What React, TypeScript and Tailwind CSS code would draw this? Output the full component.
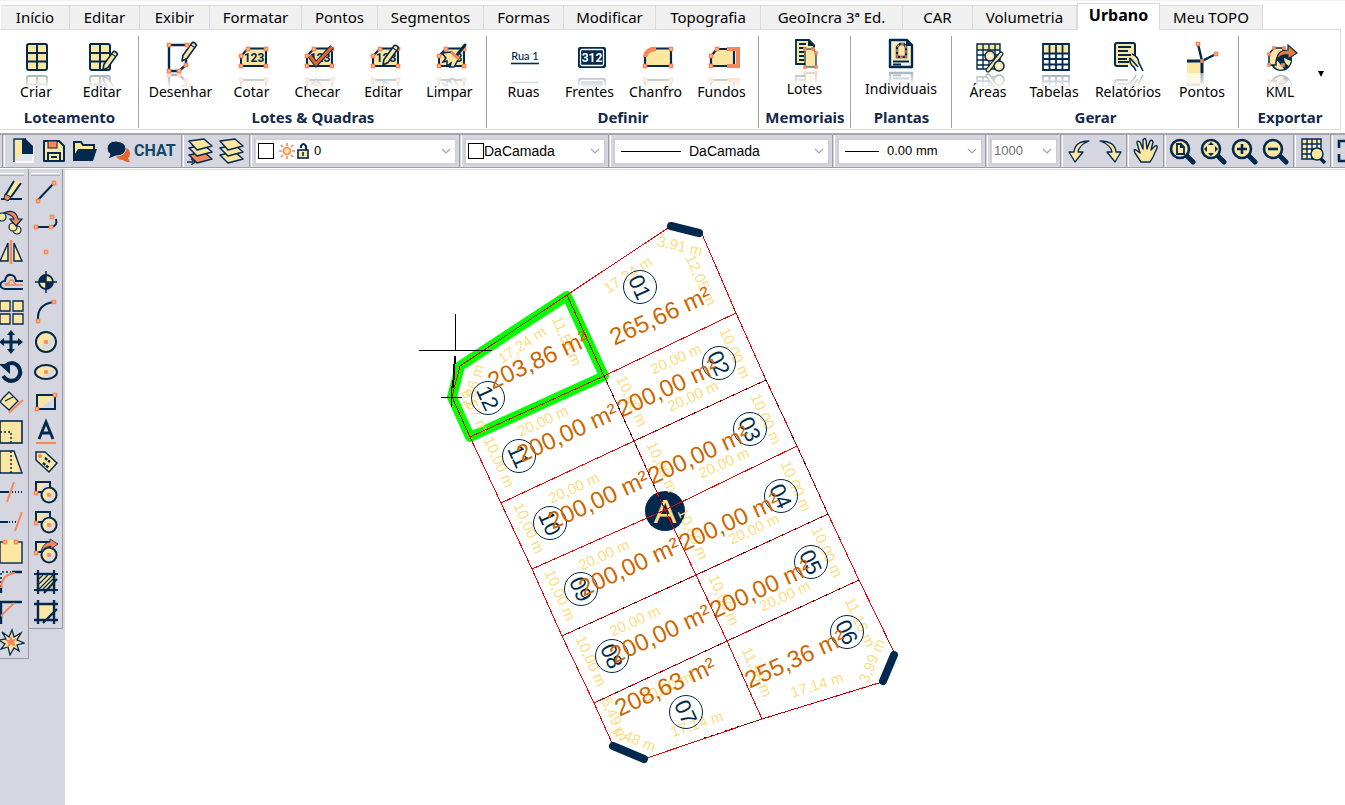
import React from 'react';

const N = '#00294d';
const Y = '#fde6a2';
const O = '#f5875a';

type Glyph = React.ReactNode;

const Dot = ({ x, y, s = 3 }: { x: number; y: number; s?: number }) => (
  <rect x={x - s / 2} y={y - s / 2} width={s} height={s} fill={Y} stroke={O} strokeWidth="1.6" />
);

const Pencil = ({ x1, y1, x2, y2 }: { x1: number; y1: number; x2: number; y2: number }) => {
  const dx = x2 - x1;
  const dy = y2 - y1;
  const len = Math.hypot(dx, dy);
  const a = (Math.atan2(dy, dx) * 180) / Math.PI;
  return (
    <g transform={`translate(${x1} ${y1}) rotate(${a})`}>
      <path d={`M1-2.5H${len - 5}L${len} 0L${len - 5} 2.5H1Q-1 0 1-2.5Z`} fill={Y} stroke={N} strokeWidth="1.6" strokeLinejoin="round" />
      <path d="M4-2.5V2.5" stroke={N} strokeWidth="1" />
    </g>
  );
};

const Lot = () => (
  <g>
    <path d="M5 25V15L12 7.500H30V25Z" fill={Y} stroke={N} strokeWidth="2" />
    <text x="18" y="21" fontSize="12" fontWeight="700" fontFamily="Roboto, sans-serif" fill={N} textAnchor="middle">
      123
    </text>
    <Dot x={5} y={25} />
    <Dot x={5} y={15} />
    <Dot x={12} y={8} />
    <Dot x={30} y={8} />
    <Dot x={30} y={25} />
  </g>
);

// ribbon glyphs, 32 x 32
const big: Record<string, Glyph> = {
  criar: (
    <g stroke={N} strokeWidth="2">
      <rect x="7" y="3" width="20" height="26" rx="2" fill={Y} />
      <path d="M17 3V29M7 12H27M7 20.500H27" />
    </g>
  ),
  editarLote: (
    <g>
      <path d="M5 3H22Q24 3 24 5V27Q24 29 22 29H6Q4 29 4 27V4Z" fill={Y} stroke={N} strokeWidth="2" />
      <path d="M14 3V29M4 12H24M4 20.500H24" stroke={N} strokeWidth="2" />
      <Pencil x1={30} y1={11} x2={17} y2={29} />
    </g>
  ),
  desenhar: (
    <g>
      <path d="M4 4H22M4 4V30H14L21 24V18" fill="none" stroke={N} strokeWidth="2.400" />
      <Pencil x1={30} y1={2} x2={17} y2={20} />
      <Dot x={4} y={4} />
      <Dot x={22} y={4} />
      <Dot x={21} y={24} />
      <Dot x={14} y={30} />
      <Dot x={4} y={30} />
    </g>
  ),
  cotar: <Lot />,
  checar: (
    <g>
      <Lot />
      <path d="M8 15L14 23L30 6" fill="none" stroke={N} strokeWidth="5" />
      <path d="M8 15L14 23L30 6" fill="none" stroke="#e8622c" strokeWidth="3" />
    </g>
  ),
  editarNum: (
    <g>
      <Lot />
      <Pencil x1={29} y1={5} x2={15} y2={24} />
    </g>
  ),
  limpar: (
    <g>
      <Lot />
      <path d="M31 4L23 14" stroke={N} strokeWidth="3" strokeLinecap="round" />
      <path d="M8 12L17 11L25 17L20 26H16L17 22L13 25L13 20L9 21L12 17Z" fill={Y} stroke={N} strokeWidth="1.500" />
      <path d="M17 11L25 18" stroke={O} strokeWidth="3" />
    </g>
  ),
  ruas: (
    <g>
      <text x="17" y="19" fontSize="11" fontWeight="500" fontFamily="Lato, sans-serif" fill={N} textAnchor="middle">
        Rua 1
      </text>
      <path d="M3 22.500H31" stroke={N} strokeWidth="1.600" />
    </g>
  ),
  frentes: (
    <g>
      <rect x="4" y="6" width="28" height="21" rx="2" fill={N} />
      <rect x="6.500" y="8.500" width="23" height="16" rx="1.500" fill="none" stroke="#fff" strokeWidth="1.300" />
      <text x="18" y="21" fontSize="12" fontWeight="700" fontFamily="Roboto, sans-serif" fill="#fff" textAnchor="middle">
        312
      </text>
    </g>
  ),
  chanfro: (
    <g>
      <path d="M5 25V14L12 7.500H31V25Z" fill={Y} stroke={N} strokeWidth="2.200" />
      <path d="M5 16Q6 8 16 8" fill="none" stroke={O} strokeWidth="4.500" />
      <Dot x={5} y={25} />
      <Dot x={31} y={25} />
      <Dot x={31} y={8} />
    </g>
  ),
  fundos: (
    <g>
      <path d="M5 25V15L11 8H28V25Z" fill={Y} stroke={N} strokeWidth="2.200" />
      <path d="M21 6H34V27H21V23H30V10H21Z" fill={O} />
      <Dot x={5} y={25} />
      <Dot x={5} y={15} />
      <Dot x={11} y={8} />
    </g>
  ),
  lotes: (
    <g>
      <path d="M7 2H20L25 7V26H7Z" fill={Y} stroke={N} strokeWidth="1.800" />
      <path d="M19 1L26 8H19Z" fill={N} />
      <path d="M10 6H17M10 10H17M10 14H15M10 18H15M10 22H15" stroke={N} strokeWidth="1.800" />
      <path d="M16 29V11H24L27 15V29Z" fill={Y} stroke={N} strokeWidth="1.200" />
      <Dot x={16} y={11} s={2} />
      <Dot x={24} y={11} s={2} />
      <Dot x={27} y={15} s={2} />
      <Dot x={16} y={29} s={2} />
      <Dot x={27} y={29} s={2} />
    </g>
  ),
  individuais: (
    <g>
      <path d="M5 2H22L27 7V29H5Z" fill="#f6f2e6" stroke={N} strokeWidth="2.400" strokeLinejoin="round" />
      <path d="M21 1L28 8H21Z" fill={N} />
      <path d="M8 5H20V9H24V22H8Z" fill={Y} />
      <path d="M12 19V9L15 6H19L21 9V19Z" fill={Y} stroke={N} strokeWidth="2.400" />
      <path d="M12 19V9L15 6H19L21 9V19Z" fill="none" stroke={O} strokeWidth="1.400" strokeDasharray="3 2" />
      <path d="M8 23.500H24M8 26.500H16" stroke={N} strokeWidth="1.800" />
    </g>
  ),
  areas: (
    <g>
      <rect x="5" y="3" width="23" height="25" fill="#fff" />
      <rect x="5" y="3" width="23" height="6" fill={Y} />
      <path d="M5 3H28V28H5ZM5 9H28M5 14H28M5 19H28M5 24H28M11 3V28M17 3V28M23 3V28" fill="none" stroke={N} strokeWidth="1.400" />
      <path d="M29 13L16 29" stroke={N} strokeWidth="5" strokeLinecap="round" />
      <path d="M29 13L16 29" stroke={Y} strokeWidth="2.500" strokeLinecap="round" />
      <g stroke={N} strokeWidth="5.500" fill="none">
        <circle cx="18" cy="15" r="3" />
        <circle cx="27" cy="25" r="3" />
      </g>
      <g stroke={Y} strokeWidth="2.500" fill="#fff">
        <circle cx="18" cy="15" r="3" />
        <circle cx="27" cy="25" r="3" />
      </g>
    </g>
  ),
  tabelas: (
    <g>
      <rect x="5" y="3" width="26" height="26" fill="#fff" />
      <rect x="5" y="3" width="26" height="10" fill={Y} />
      <path d="M5 3H31V29H5ZM5 12.500H31M5 18H31M5 23.500H31M11.500 3V29M18 3V29M24.500 3V29" fill="none" stroke={N} strokeWidth="1.800" />
    </g>
  ),
  relatorios: (
    <g>
      <path d="M4 2H21Q23 2 23 4V17L27 22V24H4Q3 24 3 22V3Z" fill={Y} />
      <path d="M16 25H5Q3 25 3 23V4Q3 2 5 2H21Q23 2 23 4V15" fill="none" stroke={N} strokeWidth="2" />
      <path d="M6 6H19M6 10H16M6 14H19M6 18H15M6 21H17" stroke={N} strokeWidth="1.800" />
      <path d="M18 17L26 26M20 13Q26 15 27 22L31 30M18 17Q17 23 22 26L24 30" fill="none" stroke={N} strokeWidth="1.600" />
    </g>
  ),
  pontos: (
    <g>
      <rect x="1" y="20" width="15" height="12" fill={Y} />
      <path d="M1 20H16V32" fill="none" stroke={N} strokeWidth="3" />
      <path d="M16 20L12 3M16 20L30 13" stroke={N} strokeWidth="2.400" />
      <Dot x={12} y={3} />
      <Dot x={30} y={13} />
      <Dot x={16} y={20} s={2} />
    </g>
  ),
  kml: (
    <g>
      <circle cx="17" cy="19" r="11" fill={N} />
      <path d="M8 21Q13 17 16 23L20 28Q12 31 8 21ZM20 17L27 20L25 25Q20 22 20 17Z" fill={Y} />
      <path d="M5 24V13L10 7H19V13Q11 15 12 24Z" fill={Y} stroke={N} strokeWidth="1.500" />
      <path d="M13 19Q13 9 24 9V4L33 12L24 18V14Q17 13 13 19Z" fill="#f0763c" stroke={N} strokeWidth="1.200" />
      <Dot x={5} y={24} s={2} />
      <Dot x={5} y={13} s={2} />
      <Dot x={10} y={7} s={2} />
      <Dot x={20} y={7} s={2} />
      <Dot x={19} y={24} s={2} />
    </g>
  ),
};

const Lens = ({ children }: { children: Glyph }) => (
  <g>
    <path d="M18 18L25 25" stroke={N} strokeWidth="5" strokeLinecap="round" />
    <circle cx="12" cy="12" r="9" fill={Y} stroke={N} strokeWidth="2.600" />
    {children}
  </g>
);

const Layers = ({ last = Y }: { last?: string }) => (
  <g stroke={N} strokeWidth="1.500" strokeLinejoin="round">
    <path d="M3 18L18 15L26 22L11 26Z" fill={last} />
    <path d="M3 11L18 8L26 15L11 19Z" fill={Y} />
    <path d="M3 4L18 2L26 9L11 13Z" fill={Y} />
  </g>
);

// toolbar glyphs, 28 x 28
const bar: Record<string, Glyph> = {
  novo: (
    <g>
      <path d="M5 3H17L23 9V25H5Z" fill="#eef0f6" />
      <path d="M5 3H14V17L5 25Z" fill={Y} />
      <path d="M5 25V2H17L24 9V25Z" fill="none" stroke="#fff" strokeWidth="1.400" />
      <path d="M5 25V2H17" fill="none" stroke={N} strokeWidth="1.400" />
      <path d="M13 2H17L24 9V17H13Z" fill={N} />
      <path d="M6 24L13 17H23V24Z" fill="#e4e6ee" />
    </g>
  ),
  salvar: (
    <g>
      <path d="M4 4H19L24 9V24H4Z" fill={Y} stroke={N} strokeWidth="2" strokeLinejoin="round" />
      <rect x="8" y="4" width="9" height="7" fill={O} stroke={N} />
      <path d="M8 24V16H20V24M11 20H17" fill="none" stroke={N} strokeWidth="2" />
    </g>
  ),
  abrir: (
    <g>
      <path d="M3 22V5H10L12 8H23V12" fill={Y} stroke={N} strokeWidth="2" />
      <path d="M7 12H26L22 24H2V20Z" fill={N} />
    </g>
  ),
  niveis: (
    <g>
      <Layers last={O} />
      <path d="M1 25H7M5 22L9 25L5 28" fill="none" stroke={N} strokeWidth="1.500" />
    </g>
  ),
  camadas: <Layers />,
  desfazer: <path d="M24 4Q10 4 9 15L4 15L10 25L18 15L13 15Q14 8 24 4Z" fill={Y} stroke={N} strokeWidth="1.300" strokeLinejoin="round" />,
  refazer: <path d="M4 4Q19 4 20 15L25 15L19 25L11 15L16 15Q15 8 4 4Z" fill={Y} stroke={N} strokeWidth="1.300" strokeLinejoin="round" />,
  mao: (
    <path
      d="M9 25L3 16Q1 12 4 13L8 16L5 6Q5 3 8 5L11 12L11 3Q13 0 14 3L15 12L18 4Q20 2 21 5L19 13L23 9Q26 8 25 11L21 20L18 25Z"
      fill={Y}
      stroke={N}
      strokeWidth="1.400"
      strokeLinejoin="round"
    />
  ),
  zoomPagina: (
    <Lens>
      <path d="M9 7H13L16 10V17H9Z" fill={Y} stroke={N} strokeWidth="1.800" />
      <path d="M12 6L17 11H12Z" fill={N} />
    </Lens>
  ),
  zoomTudo: (
    <Lens>
      <path d="M12 5L15 8H9ZM12 19L9 16H15ZM5 12L8 9V15ZM19 12L16 15V9Z" fill={N} />
    </Lens>
  ),
  zoomMais: (
    <Lens>
      <path d="M7 12H17M12 7V17" stroke={N} strokeWidth="2.600" />
    </Lens>
  ),
  zoomMenos: (
    <Lens>
      <path d="M7 12H17" stroke={N} strokeWidth="2.600" />
    </Lens>
  ),
  consulta: (
    <g>
      <rect x="3" y="2" width="19" height="20" fill="#fff" />
      <path d="M3 2H22V7H3ZM3 7H8V22H3Z" fill={Y} />
      <path d="M3 2H22V22H3ZM3 7H22M3 12H22M3 17H22M8 2V22M13 2V22M18 2V22" fill="none" stroke={N} strokeWidth="1.400" />
      <path d="M21 21L26 26" stroke={N} strokeWidth="3.500" />
      <circle cx="18" cy="17" r="6" fill={Y} stroke={N} strokeWidth="1.500" />
    </g>
  ),
};

const Cut = ({ children }: { children: Glyph }) => (
  <g>
    <rect x="4" y="4" width="14" height="10" fill={Y} stroke={N} strokeWidth="2" />
    <circle cx="17" cy="17" r="7.500" fill={Y} stroke={N} strokeWidth="2" />
    <path d="M6 13L14 6H17V9Q12 9 10 13Z" fill="#d9d9e4" />
    <path d="M14 22L22 13Q24 20 18 23Z" fill="#d9d9e4" />
    {children}
  </g>
);

// side bar glyphs, 28 x 28
const left: Record<string, Glyph> = {
  Apagar: (
    <g>
      <path d="M8 19L17 3H25L14 20Z" fill={Y} />
      <path d="M8 18L17 3M14 19L24 5M4 21H25" stroke={N} strokeWidth="2" />
      <path d="M8 16L14 19L11 23L7 21Z" fill={O} stroke={N} />
    </g>
  ),
  Copiar: (
    <g stroke={N} strokeWidth="1.200">
      <circle cx="5" cy="9" r="4" fill={Y} />
      <circle cx="20" cy="22" r="4" fill={Y} />
      <circle cx="16" cy="19" r="4" fill={Y} />
      <path d="M6 5Q19 0 21 11H25L19 18L13 11H17Q15 6 6 5Z" fill={O} />
    </g>
  ),
  Espelhar: (
    <g>
      <path d="M11 5V23H3ZM17 5V23H25Z" fill={Y} stroke={N} strokeWidth="1.400" />
      <path d="M14 2V26" stroke={O} strokeWidth="2.400" />
    </g>
  ),
  Offset: (
    <g fill="none" strokeWidth="2">
      <path d="M26 21H8Q2 20 4 15Q5 13 8 13Q9 6 14 7Q18 7 19 13H26" stroke={N} />
      <path d="M26 17H9Q7 17 9 16L12 15Q13 10 16 13L19 17" stroke={O} strokeWidth="1.600" />
    </g>
  ),
  Matriz: (
    <g fill={Y} stroke={N} strokeWidth="1.300">
      <path d="M3 3H13V13H3ZM16 3H26V13H16ZM3 16H13V26H3ZM16 16H26V26H16Z" />
    </g>
  ),
  Mover: <path d="M14 2L18 7H15.500V12.500H21V10L26 14L21 18V15.500H15.500V21H18L14 26L10 21H12.500V15.500H7V18L2 14L7 10V12.500H12.500V7H10Z" fill={N} />,
  Girar: (
    <g>
      <path d="M8 8Q15 2 21 8Q26 15 20 21Q12 26 6 18" fill="none" stroke={N} strokeWidth="4" />
      <path d="M2 6H13V16Z" fill={N} />
    </g>
  ),
  Alinhar: (
    <g>
      <path d="M6 10L12 4L17 9L21 13L12 22L3 14Z" fill={Y} stroke={N} strokeWidth="1.300" />
      <path d="M8 13L16 9" stroke={N} strokeWidth="1.200" />
      <path d="M12 25L26 12" stroke={O} strokeWidth="2" />
    </g>
  ),
  Escala: (
    <g>
      <rect x="3" y="3" width="22" height="22" fill={Y} stroke={N} strokeWidth="1.600" />
      <path d="M3 14H14V25" fill="none" stroke={N} strokeWidth="1.500" strokeDasharray="2 2" />
    </g>
  ),
  Esticar: (
    <g>
      <path d="M3 3H17L25 25H3Z" fill={Y} stroke={N} strokeWidth="1.400" />
      <path d="M14 3V25" stroke={N} strokeWidth="1.500" strokeDasharray="2 2" />
    </g>
  ),
  Aparar: (
    <g>
      <path d="M2 14H12" stroke={N} strokeWidth="2" />
      <path d="M15 14H26" stroke={N} strokeWidth="2" strokeDasharray="1 2" />
      <path d="M17 4L10 24" stroke={O} strokeWidth="2" />
    </g>
  ),
  Estender: (
    <g>
      <path d="M2 14H11" stroke={N} strokeWidth="2" />
      <path d="M12 14H21" stroke={N} strokeWidth="2" strokeDasharray="1 2" />
      <path d="M25 4L18 23" stroke={O} strokeWidth="2" />
    </g>
  ),
  Quebrar: (
    <g>
      <rect x="3" y="4" width="22" height="21" fill={Y} stroke={N} strokeWidth="1.400" />
      <rect x="8" y="2" width="10" height="4" fill={Y} />
      <Dot x={8} y={4} />
      <Dot x={19} y={4} />
    </g>
  ),
  Arredondar: (
    <g fill="none">
      <path d="M4 25V17M15 4H25" stroke={N} strokeWidth="2.400" />
      <path d="M4 15V4H14" stroke={N} strokeWidth="1.600" strokeDasharray="2 2" />
      <path d="M4 20Q5 6 18 5" stroke={O} strokeWidth="2" />
    </g>
  ),
  Chanfrar: (
    <g fill="none">
      <path d="M4 26V4H25" stroke={N} strokeWidth="2.400" />
      <path d="M4 18L17 5" stroke={O} strokeWidth="2" />
    </g>
  ),
  Explodir: (
    <g>
      <path d="M15 2L17 9L24 5L20 12L27 15L20 17L22 23L17 20L13 27L11 19L4 21L8 16L2 12L9 11L5 4L12 9Z" fill={Y} stroke={N} strokeWidth="1.300" />
      <path d="M14 8L16 12L20 10L17 14L19 19L14 16.500L10 20L11.500 15L8 12L12 12Z" fill={O} />
    </g>
  ),
};

const right: Record<string, Glyph> = {
  Linha: (
    <g>
      <path d="M6 22L22 5" stroke={N} strokeWidth="2" />
      <Dot x={6} y={23} />
      <Dot x={22} y={5} />
    </g>
  ),
  Polilinha: (
    <g>
      <path d="M5 19H19Q26 18 24 11" fill="none" stroke={N} strokeWidth="2" />
      <Dot x={4} y={19} />
      <Dot x={19} y={19} />
      <Dot x={20} y={9} />
    </g>
  ),
  Ponto: <Dot x={14} y={14} />,
  'Ponto topográfico': (
    <g>
      <circle cx="14" cy="14" r="7" fill={Y} stroke={N} strokeWidth="1.800" />
      <path d="M14 14V7A7 7 0 0 0 7 14ZM14 14V21A7 7 0 0 0 21 14Z" fill={N} />
      <path d="M14 3V25M3 14H25" stroke={N} strokeWidth="1.500" />
    </g>
  ),
  Arco: (
    <g>
      <path d="M6 22Q5 6 22 4" fill="none" stroke={N} strokeWidth="2" />
      <Dot x={6} y={23} />
      <Dot x={22} y={4} />
    </g>
  ),
  Círculo: (
    <g>
      <circle cx="14" cy="14" r="10" fill={Y} stroke={N} strokeWidth="2" />
      <path d="M8 21L21 8Q25 17 16 22Z" fill="#d9d9e4" />
      <Dot x={14} y={14} s={2} />
    </g>
  ),
  Elipse: (
    <g>
      <ellipse cx="14" cy="14" rx="11" ry="7" fill={Y} stroke={N} strokeWidth="2" />
      <path d="M10 19L21 10Q26 17 14 20Z" fill="#d9d9e4" />
      <Dot x={14} y={14} s={2} />
    </g>
  ),
  Retângulo: (
    <g>
      <rect x="5" y="7" width="18" height="14" fill={Y} stroke={N} strokeWidth="2" />
      <path d="M8 20L22 9V20Z" fill="#d9d9e4" />
      <Dot x={5} y={21} />
      <Dot x={23} y={7} />
    </g>
  ),
  Texto: (
    <g>
      <path d="M7 21L14 4L21 21M9 15H19" fill="none" stroke={N} strokeWidth="2.800" />
      <path d="M4 25H24" stroke={O} strokeWidth="2" />
    </g>
  ),
  Etiqueta: (
    <g>
      <path d="M4 4H13L25 15L17 24L4 12Z" fill={Y} stroke={N} strokeWidth="1.500" />
      <circle cx="8" cy="8" r="2" fill={O} />
      <path d="M13 10L18 14M11 15L17 20" stroke={N} strokeWidth="2.400" strokeDasharray="3 1" />
    </g>
  ),
  'Unir formas': (
    <Cut>
      <Dot x={4} y={15} />
      <Dot x={17} y={17} s={2} />
    </Cut>
  ),
  'Separar formas': (
    <Cut>
      <Dot x={4} y={15} />
      <Dot x={17} y={17} s={2} />
    </Cut>
  ),
  'Mover forma': (
    <Cut>
      <path d="M9 13Q12 4 18 4V1L26 6L19 11V8Q14 8 9 13Z" fill={O} stroke={N} strokeWidth="0.800" />
      <Dot x={4} y={15} />
      <Dot x={17} y={17} s={2} />
    </Cut>
  ),
  Hachura: (
    <g>
      <rect x="6" y="6" width="16" height="16" fill={Y} stroke={N} strokeWidth="2.400" />
      <path d="M2 6H26M2 22H26M6 2V26M22 2V26M12 25L25 11" fill="none" stroke={N} strokeWidth="2.200" />
      <path d="M7 11L11 7M7 16L16 7M7 21L21 7M11 21L21 11" stroke={N} strokeWidth="1.200" />
    </g>
  ),
  Preencher: (
    <g>
      <path d="M6 6H22V12L12 22H6Z" fill={Y} />
      <path d="M2 6H26M2 22H26M6 2V26M22 2V26M11 25L25 11" fill="none" stroke={N} strokeWidth="2.400" />
    </g>
  ),
};

const tabs: [string, string][] = [
  ['Início', 'w-[69px]'],
  ['Editar', 'w-[70px]'],
  ['Exibir', 'w-[70px]'],
  ['Formatar', 'w-[92px]'],
  ['Pontos', 'w-[76px]'],
  ['Segmentos', 'w-[106px]'],
  ['Formas', 'w-20'],
  ['Modificar', 'w-[92px]'],
  ['Topografia', 'w-[105px]'],
  ['GeoIncra 3ª Ed.', 'w-[142px]'],
  ['CAR', 'w-[70px]'],
  ['Volumetria', 'w-[104px]'],
  ['Urbano', 'w-[83px]'],
  ['Meu TOPO', 'w-[103px]'],
];

type Tool = { label: string; icon: string; width?: string };
type Group = { title: string; width: string; tools: Tool[]; raised?: boolean; more?: boolean };

const groups: Group[] = [
  {
    title: 'Loteamento',
    width: 'w-[139px]',
    tools: [
      { label: 'Criar', icon: 'criar' },
      { label: 'Editar', icon: 'editarLote' },
    ],
  },
  {
    title: 'Lotes & Quadras',
    width: 'w-[348px]',
    tools: [
      { label: 'Desenhar', icon: 'desenhar', width: 'w-[76px]' },
      { label: 'Cotar', icon: 'cotar' },
      { label: 'Checar', icon: 'checar' },
      { label: 'Editar', icon: 'editarNum' },
      { label: 'Limpar', icon: 'limpar' },
    ],
  },
  {
    title: 'Definir',
    width: 'w-[272px]',
    tools: [
      { label: 'Ruas', icon: 'ruas' },
      { label: 'Frentes', icon: 'frentes' },
      { label: 'Chanfro', icon: 'chanfro' },
      { label: 'Fundos', icon: 'fundos' },
    ],
  },
  { title: 'Memoriais', width: 'w-[92px]', raised: true, tools: [{ label: 'Lotes', icon: 'lotes' }] },
  { title: 'Plantas', width: 'w-[101px]', raised: true, tools: [{ label: 'Individuais', icon: 'individuais', width: 'w-20' }] },
  {
    title: 'Gerar',
    width: 'w-[287px]',
    tools: [
      { label: 'Áreas', icon: 'areas' },
      { label: 'Tabelas', icon: 'tabelas' },
      { label: 'Relatórios', icon: 'relatorios', width: 'w-[82px]' },
      { label: 'Pontos', icon: 'pontos' },
    ],
  },
  { title: 'Exportar', width: 'w-[102px]', more: true, tools: [{ label: 'KML', icon: 'kml' }] },
];

const RibbonTool = ({ tool }: { tool: Tool }) => (
  <button type="button" className={`flex flex-col items-center ${tool.width ?? 'w-[66px]'}`}>
    <svg viewBox="0 0 32 32" className="h-8 w-8 overflow-visible" aria-hidden="true">
      {big[tool.icon]}
    </svg>
    <span className="h-4 w-9 overflow-hidden opacity-40 [mask-image:linear-gradient(black,transparent)] [&_text]:hidden" aria-hidden="true">
      <svg viewBox="-2 0 36 32" className="h-8 w-9 -scale-y-100">
        {big[tool.icon]}
      </svg>
    </span>
    <span className="relative -mt-[7px] text-sm leading-5 text-black">{tool.label}</span>
  </button>
);

const RibbonGroup = ({ group }: { group: Group }) => (
  <section className={`relative flex shrink-0 flex-col ${group.width}`}>
    <div className={`flex h-[77px] justify-center ${group.raised ? 'pt-2' : 'pt-[11px]'} ${group.more ? 'pr-5' : 'pr-px'}`}>
      {group.tools.map((t) => (
        <RibbonTool key={t.label} tool={t} />
      ))}
    </div>
    <h2 className="text-center text-[15px] leading-5 font-bold whitespace-nowrap text-[#14294b]">{group.title}</h2>
    {group.more ? (
      <button type="button" aria-label="Mais" className="absolute top-10 right-4">
        <svg viewBox="0 0 8 8" className="h-2 w-2">
          <path d="M1 1H7L4 7Z" fill="#000" />
        </svg>
      </button>
    ) : (
      <span className="absolute top-1.5 right-0 h-[92px] w-px bg-[#a0a0a0]" />
    )}
  </section>
);

const BarButton = ({ icon, width = 'w-[31px]' }: { icon: string; width?: string }) => (
  <button type="button" aria-label={icon} className={`flex h-8 shrink-0 items-center justify-center ${width}`}>
    <svg viewBox="0 0 28 28" className="h-7 w-7" aria-hidden="true">
      {bar[icon]}
    </svg>
  </button>
);

const Sep = () => <span className="h-8 w-[3px] shrink-0 border-r border-l border-r-white border-l-[#9a9aa4]" />;

type ComboProps = { id: string; value: string; width: string; children?: React.ReactNode; text?: string };

const Combo = ({ id, value, width, children, text = 'text-[13px] text-black' }: ComboProps) => (
  <label htmlFor={id} className={`mx-0.5 flex h-[27px] shrink-0 items-center border-2 border-[#d0d0d4] bg-white pr-1 pl-0.5 ${width}`}>
    {children}
    <select id={id} aria-label={id} defaultValue={value} className={`min-w-0 flex-1 appearance-none bg-transparent font-['Liberation_Sans',sans-serif] outline-none ${text}`}>
      <option>{value}</option>
    </select>
    <svg viewBox="0 0 10 6" className="h-1.5 w-2.5 shrink-0" fill="none" stroke="#a6a6a6" strokeWidth="1.2" aria-hidden="true">
      <path d="M1 1L5 5L9 1" />
    </svg>
  </label>
);

const Swatch = () => <span className="h-4 w-4 shrink-0 border border-black bg-white" />;

const SideBar = ({ icons, narrow }: { icons: Record<string, Glyph>; narrow?: boolean }) => (
  <div className={`flex flex-col self-start border-r border-b border-[#9a9aa4] pb-px ${narrow ? 'w-[29px] items-start' : 'w-[34px] items-center'}`}>
    <span className="mt-1 mb-px h-[3px] w-[calc(100%-4px)] border-t border-b border-t-white border-b-[#b0b0b8]" />
    {Object.entries(icons).map(([name, glyph]) => (
      <button key={name} type="button" aria-label={name} title={name} className={`flex h-[30px] items-center justify-center ${narrow ? 'w-[22px]' : 'w-8'}`}>
        <svg viewBox="0 0 28 28" className="h-7 w-7 shrink-0" aria-hidden="true">
          {glyph}
        </svg>
      </button>
    ))}
  </div>
);

const ROW = -24.6;
const COL = 65.4;

const lots: [string, number, number][] = [
  ['01', 640, 287],
  ['02', 719, 363],
  ['03', 750, 429],
  ['04', 781, 496],
  ['05', 811, 562],
  ['06', 847, 632],
  ['07', 686, 712],
  ['08', 612, 656],
  ['09', 581, 589],
  ['10', 550, 523],
  ['11', 519, 456],
  ['12', 488, 398],
];

const areas: [string, number, number][] = [
  ['265,66 m²', 660, 315],
  ['200,00 m²', 667, 387],
  ['200,00 m²', 698, 454],
  ['200,00 m²', 729, 521],
  ['200,00 m²', 760, 588],
  ['255,36 m²', 795, 658],
  ['208,63 m²', 665, 686],
  ['200,00 m²', 660, 633],
  ['200,00 m²', 629, 566],
  ['200,00 m²', 598, 499],
  ['200,00 m²', 567, 432],
  ['203,86 m²', 538, 359],
];

const dims: [string, number, number, number][] = [
  ['17,24 m', 628, 275, -33.5],
  ['3,91 m', 680, 246, 13],
  ['12,05 m', 701, 280, COL],
  ['10,00 m', 735, 353, COL],
  ['10,00 m', 766, 419, COL],
  ['10,00 m', 796, 486, COL],
  ['10,00 m', 827, 552, COL],
  ['11,16 m', 860, 622, COL],
  ['3,99 m', 872, 661, -67],
  ['17,14 m', 817, 685, -17],
  ['17,14 m', 697, 724, -18],
  ['4,48 m', 634, 739, 22],
  ['6,49 m', 615, 719, COL],
  ['20,00 m', 667, 687, ROW],
  ['20,00 m', 676, 359, ROW],
  ['20,00 m', 693, 396, ROW],
  ['20,00 m', 724, 463, ROW],
  ['20,00 m', 754, 529, ROW],
  ['20,00 m', 785, 596, ROW],
  ['20,00 m', 543, 421, ROW],
  ['20,00 m', 574, 488, ROW],
  ['20,00 m', 604, 555, ROW],
  ['20,00 m', 635, 621, ROW],
  ['10,00 m', 499, 462, COL],
  ['10,00 m', 529, 528, COL],
  ['10,00 m', 560, 595, COL],
  ['10,00 m', 591, 661, COL],
  ['10,00 m', 632, 401, COL],
  ['10,00 m', 662, 467, COL],
  ['10,00 m', 693, 534, COL],
  ['10,00 m', 724, 600, COL],
  ['11,58 m', 757, 672, COL],
  ['11,58 m', 567, 341, COL],
  ['17,24 m', 522, 345, -33.5],
  ['4,86 m', 473, 387, -74],
  ['6,57 m', 475, 411, COL],
];

const Plan = () => (
  <svg viewBox="65 170 1280 635" width="1280" height="635" className="block max-w-none font-['Liberation_Sans',sans-serif]" role="img" aria-label="Quadra A">
    <path d="M567 296L604 376L470 437L452 397L460 366Z" fill="none" stroke="#00ff00" strokeWidth="10" strokeLinejoin="round" />
    <circle cx="665" cy="511" r="20" fill={N} />
    <g fill="#fddd85" fontSize="15" textAnchor="middle">
      {dims.map(([t, x, y, a], i) => (
        <text key={i} transform={`translate(${x} ${y}) rotate(${a})`} dy="5">
          {t}
        </text>
      ))}
    </g>
    <g fill={N} fontSize="22" textAnchor="middle">
      {lots.map(([t, x, y]) => (
        <g key={t}>
          <circle cx={x} cy={y} r="16.500" fill="none" stroke={N} strokeWidth="1" />
          <text transform={`translate(${x} ${y}) rotate(${COL})`} dy="8">
            {t}
          </text>
        </g>
      ))}
    </g>
    <g fill="#cc6600" fontSize="24" textAnchor="middle">
      {areas.map(([t, x, y], i) => (
        <text key={i} transform={`translate(${x} ${y}) rotate(${ROW})`} dy="9">
          {t}
        </text>
      ))}
    </g>
    <text x="665" y="523" fontSize="34" textAnchor="middle" fill="#fddd85">
      A
    </text>
    <g fill="none" stroke="#f00000" strokeWidth="1" shapeRendering="crispEdges">
      <path d="M668 228L567 295L460 366L452 397L470 437L501 503L532 569L562 636L594 703L612 743M644 759L762 719L882 682M894 652L859 580L828 514L797 446L766 380L736 313L702 234" />
      <path d="M567 295L604 376L634 441L665 510L696 575L727 641L762 719" />
      <path d="M736 313L604 376L470 437M766 380L634 441L501 503M797 446L665 510L532 569M828 514L696 575L562 636M859 580L727 641L594 703" />
    </g>
    <g fill="none" stroke="#000" strokeWidth="1" strokeDasharray="2 5" shapeRendering="crispEdges">
      <path d="M604 376L634 441L665 510M766 380L797 446L828 514M766 380L634 441M828 514L696 575L562 636M859 580L727 641L594 703M704 738L762 719L882 682" />
    </g>
    <g stroke={N} strokeWidth="8" strokeLinecap="round">
      <path d="M671 226L699 233M894 655L883 681M613 746L644 759" />
    </g>
    <g stroke="#000" strokeWidth="1" shapeRendering="crispEdges">
      <path d="M419 350.500H492M455.500 314V350M441 397.500H462M451.500 386V407" />
      <path d="M455 356L453 388" strokeWidth="2" />
    </g>
  </svg>
);

export default function App() {
  return (
    <div className="flex min-h-screen flex-col overflow-hidden bg-white font-['Noto_Sans',Tahoma,sans-serif]">
      <nav className="flex h-[29px] items-end border-t border-[#f0f0fa] pl-px">
        {tabs.map(([name, width]) =>
          name === 'Urbano' ? (
            <button key={name} type="button" className={`relative z-10 -mb-px h-[27px] shrink-0 border border-b-0 border-[#dadada] bg-white pb-1 text-base leading-5 font-bold text-black ${width}`}>
              {name}
            </button>
          ) : (
            <button key={name} type="button" className={`h-6 shrink-0 border-t border-r border-[#dadada] bg-[#f0f0f0] pb-0.5 text-[15px] leading-5 whitespace-nowrap text-black ${width}`}>
              {name}
            </button>
          ),
        )}
      </nav>

      <header className="mr-1 flex h-[101px] border-t border-r border-b border-[#dadada]">
        {groups.map((g) => (
          <RibbonGroup key={g.title} group={g} />
        ))}
      </header>

      <div className="mt-[3px] flex h-[35px] items-center border-t-2 border-b border-t-[#a8a8ac] border-b-[#a0a0a4] bg-[#d6d6e0] pl-0.5">
        <Sep />
        <div className="flex pl-[2px]">
          <BarButton icon="novo" />
          <BarButton icon="salvar" />
          <BarButton icon="abrir" />
        </div>
        <button type="button" className="ml-1.5 flex h-8 w-[75px] shrink-0 items-center gap-0.5 font-['Roboto',sans-serif] text-base font-bold text-[#12476a]">
          <svg viewBox="0 0 26 24" className="h-6 w-[26px] shrink-0" aria-hidden="true">
            <path d="M12 9Q24 6 24 15Q23 19 22 19L24 23Q19 23 17 21Q9 21 10 14Z" fill="#e8622c" />
            <path d="M10 2Q20 3 20 10Q19 17 10 17L2 20L4 15Q1 13 1 9Q2 2 10 2Z" fill={N} stroke="#d6d6e0" />
          </svg>
          CHAT
        </button>
        <Sep />
        <BarButton icon="niveis" />
        <BarButton icon="camadas" />
        <span className="w-[3px] shrink-0" />
        <Sep />
        <Combo id="camada" value="0" width="w-[203px]">
          <Swatch />
          <svg viewBox="0 0 18 18" className="ml-1 h-[18px] w-[18px] shrink-0" stroke={O} strokeWidth="1.6" aria-hidden="true">
            <circle cx="9" cy="9" r="3.500" fill={Y} />
            <path d="M9 1V4M9 14V17M1 9H4M14 9H17M3 3L5 5M13 13L15 15M3 15L5 13M13 5L15 3" />
          </svg>
          <svg viewBox="0 0 14 18" className="mr-1 h-[18px] w-3.5 shrink-0" aria-hidden="true">
            <path d="M5 6V4Q7 0 10 4V9" fill="none" stroke={N} strokeWidth="2" />
            <rect x="2" y="8" width="10" height="8" fill={Y} stroke={N} strokeWidth="1.6" />
            <path d="M7 10V14" stroke={N} strokeWidth="1.6" />
          </svg>
        </Combo>
        <Sep />
        <Combo id="cor" value="DaCamada" width="w-[142px]" text="text-sm text-black">
          <Swatch />
        </Combo>
        <Sep />
        <Combo id="tipo-linha" value="DaCamada" width="w-[217px]" text="text-sm text-black pl-2">
          <span className="ml-1 h-px w-[60px] shrink-0 bg-black" />
        </Combo>
        <Sep />
        <Combo id="espessura" value="0.00 mm" width="w-[146px]" text="text-[13px] text-black pl-2">
          <span className="ml-1 h-px w-[34px] shrink-0 bg-black" />
        </Combo>
        <Sep />
        <Combo id="escala" value="1000" width="w-[68px]" text="text-[13px] text-[#707070]" />
        <Sep />
        <BarButton icon="desfazer" />
        <BarButton icon="refazer" />
        <span className="w-px shrink-0" />
        <Sep />
        <BarButton icon="mao" width="w-[34px]" />
        <Sep />
        <BarButton icon="zoomPagina" />
        <BarButton icon="zoomTudo" />
        <BarButton icon="zoomMais" />
        <BarButton icon="zoomMenos" />
        <span className="w-[3px] shrink-0" />
        <Sep />
        <BarButton icon="consulta" width="w-[34px]" />
        <Sep />
        <button type="button" aria-label="Tela cheia" className="ml-1 h-8 shrink-0">
          <svg viewBox="0 0 24 24" className="h-6 w-6" fill="none" stroke={N} strokeWidth="2.6" aria-hidden="true">
            <path d="M9 2H2V9M2 15V22H9M15 2H22V9M22 15V22H15" />
          </svg>
        </button>
      </div>

      <div className="mt-px flex flex-1">
        <aside className="flex w-[65px] shrink-0 bg-[#d6d6e0]">
          <SideBar icons={left} narrow />
          <SideBar icons={right} />
        </aside>
        <main className="min-w-0 flex-1 overflow-hidden border-t border-[#dadada]">
          <Plan />
        </main>
      </div>
    </div>
  );
}
